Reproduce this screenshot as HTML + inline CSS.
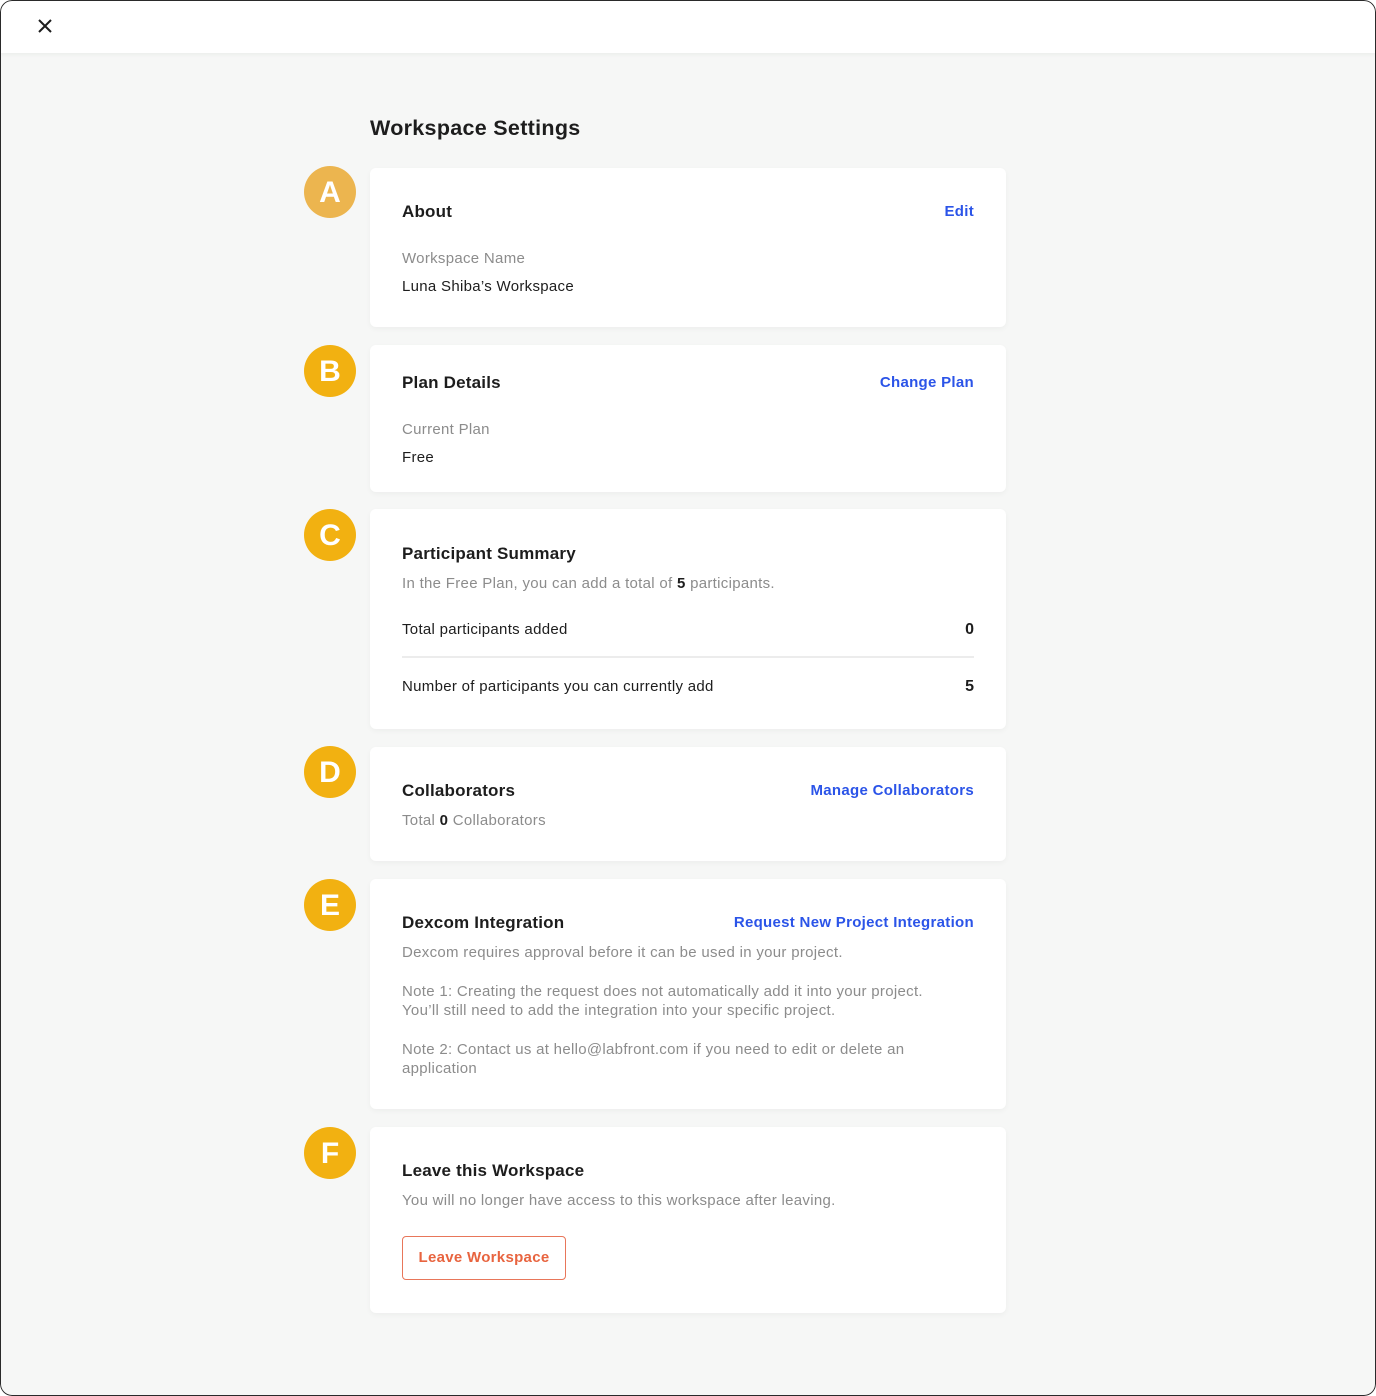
<!DOCTYPE html>
<html><head><meta charset="utf-8"><style>
*{margin:0;padding:0;box-sizing:border-box}
html,body{width:1376px;height:1396px;background:#fff;overflow:hidden;font-family:"Liberation Sans",sans-serif}
.frame{position:absolute;left:0;top:0;width:1376px;height:1396px;border-radius:12px;background:#f6f7f6;overflow:hidden}
.frame::after{content:"";position:absolute;inset:0;border:1.5px solid #2a2a2a;border-radius:12px;pointer-events:none}
.top{position:absolute;left:0;top:0;right:0;height:53px;background:#fff;box-shadow:0 2px 4px rgba(0,0,0,.04)}
.x{position:absolute;left:36px;top:17px}
.h1{position:absolute;left:370px;top:116px;font-size:21.5px;font-weight:bold;color:#1d1d1d;letter-spacing:.3px}
.card{position:absolute;left:370px;width:636px;background:#fff;border-radius:6px;box-shadow:0 2px 6px rgba(0,0,0,.04)}
.c{position:absolute;left:304px;width:52px;height:52px;border-radius:50%;background:#f2b111;color:#fff;font-weight:bold;font-size:30px;text-align:center;line-height:54px}
.t,.l,.g,.d,.v{margin-top:1px}
.t{position:absolute;left:32px;font-size:17px;font-weight:bold;color:#1d1d1d;line-height:20px;letter-spacing:.2px}
.l{position:absolute;right:32px;font-size:15px;font-weight:bold;color:#2b54e8;line-height:20px;letter-spacing:.3px}
.g{position:absolute;left:32px;font-size:15px;color:#8c8c8c;line-height:19px;letter-spacing:.3px}
.d{position:absolute;left:32px;font-size:15px;color:#1d1d1d;line-height:20px;letter-spacing:.3px}
.v{position:absolute;right:32px;font-size:16px;font-weight:bold;color:#1d1d1d;line-height:20px}
b.k{color:#1d1d1d}
</style></head><body><div class="frame">
<div class="top"><svg class="x" width="18" height="18" viewBox="0 0 18 18"><path d="M3 3L15 15M15 3L3 15" stroke="#1d1d1d" stroke-width="2"/></svg></div>
<div class="h1">Workspace Settings</div>

<div class="c" style="top:166px;background:#ecb54f">A</div>
<div class="card" style="top:168px;height:159px">
<div class="t" style="top:33px">About</div><div class="l" style="top:33px">Edit</div>
<div class="g" style="top:80px">Workspace Name</div>
<div class="d" style="top:108px">Luna Shiba’s Workspace</div>
</div>

<div class="c" style="top:345px">B</div>
<div class="card" style="top:345px;height:147px">
<div class="t" style="top:27px">Plan Details</div><div class="l" style="top:27px">Change Plan</div>
<div class="g" style="top:74px">Current Plan</div>
<div class="d" style="top:102px">Free</div>
</div>

<div class="c" style="top:509px">C</div>
<div class="card" style="top:509px;height:220px">
<div class="t" style="top:34px">Participant Summary</div>
<div class="g" style="top:64px">In the Free Plan, you can add a total of <b class="k">5</b> participants.</div>
<div class="d" style="top:110px">Total participants added</div><div class="v" style="top:110px">0</div>
<div style="position:absolute;left:32px;right:32px;top:147px;height:2px;background:#ececec"></div>
<div class="d" style="top:167px">Number of participants you can currently add</div><div class="v" style="top:167px">5</div>
</div>

<div class="c" style="top:746px">D</div>
<div class="card" style="top:747px;height:114px">
<div class="t" style="top:33px">Collaborators</div><div class="l" style="top:33px">Manage Collaborators</div>
<div class="g" style="top:63px">Total <b class="k">0</b> Collaborators</div>
</div>

<div class="c" style="top:879px">E</div>
<div class="card" style="top:879px;height:230px">
<div class="t" style="top:33px">Dexcom Integration</div><div class="l" style="top:33px">Request New Project Integration</div>
<div class="g" style="top:63px">Dexcom requires approval before it can be used in your project.</div>
<div class="g" style="top:102px">Note 1: Creating the request does not automatically add it into your project.<br>You’ll still need to add the integration into your specific project.</div>
<div class="g" style="top:160px">Note 2: Contact us at hello@labfront.com if you need to edit or delete an<br>application</div>
</div>

<div class="c" style="top:1127px">F</div>
<div class="card" style="top:1127px;height:186px">
<div class="t" style="top:33px">Leave this Workspace</div>
<div class="g" style="top:63px">You will no longer have access to this workspace after leaving.</div>
<div style="position:absolute;left:32px;top:109px;width:164px;height:44px;border:1.5px solid #e8765a;border-radius:4px;color:#e8643f;font-weight:bold;font-size:15px;text-align:center;line-height:42px;letter-spacing:.3px">Leave Workspace</div>
</div>
</div></body></html>
